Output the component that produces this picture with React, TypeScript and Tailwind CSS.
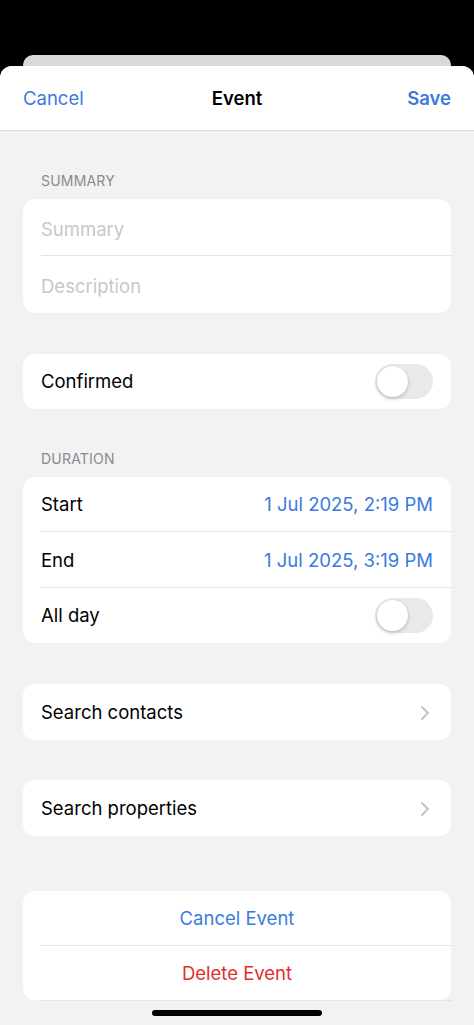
import React from 'react'

const font = { fontFamily: 'Inter, "Noto Sans", sans-serif' }

const Toggle = () => (
  <div className="relative w-[58px] h-[35px] rounded-full bg-[#e9e9ea]">
    <div className="absolute left-[2px] top-[2px] w-[31px] h-[31px] rounded-full bg-white shadow-[0_2px_4px_rgba(0,0,0,0.18),0_0_0_0.5px_rgba(0,0,0,0.06)]" />
  </div>
)

const Chevron = () => (
  <svg width="12" height="16" viewBox="0 0 12 16" fill="none">
    <path d="M3 2l6 6-6 6" stroke="#c4c4c7" strokeWidth="2" strokeLinecap="round" strokeLinejoin="round" />
  </svg>
)

const Caption = ({ children }: { children: React.ReactNode }) => (
  <div className="h-[20px] mb-[9px] pl-[18px] flex items-center text-[14px] tracking-[0.2px] text-[#8a8a8e]">
    {children}
  </div>
)

const Row = ({
  children,
  height,
  last,
}: {
  children: React.ReactNode
  height: string
  last?: boolean
}) => (
  <div className="pl-[18px]">
    <div
      className={`${height} pr-[18px] flex items-center justify-between ${last ? '' : 'border-b border-[#e4e4e6]'}`}
    >
      {children}
    </div>
  </div>
)

export default function App() {
  return (
    <div className="relative h-[1025px] overflow-hidden bg-black" style={font}>
      <div className="h-[55px]" />
      <div className="mx-[23px] h-[11px] rounded-t-[10px] bg-[#d9d9d9]" />

      <div className="h-[959px] rounded-t-[12px] overflow-hidden bg-[#f2f2f2]">
        {/* header */}
        <div className="h-[65px] pt-[2px] bg-white border-b border-[#d6d6d8] px-[23px] flex items-center text-[18.5px]">
          <span className="flex-1 text-[#3a7ae0]">Cancel</span>
          <span className="font-semibold text-black">Event</span>
          <span className="flex-1 text-right font-semibold text-[#3a7ae0]">Save</span>
        </div>

        <div className="px-[23px] pt-[39px] text-[18.5px] text-black">
          <Caption>SUMMARY</Caption>
          <div className="rounded-[12px] bg-white">
            <Row height="h-[57px] pt-[5px]">
              <span className="text-[#c7c7c9]">Summary</span>
            </Row>
            <Row height="h-[57px] pt-[5px]" last>
              <span className="text-[#c7c7c9]">Description</span>
            </Row>
          </div>

          <div className="mt-[41px] rounded-[12px] bg-white">
            <Row height="h-[55px]" last>
              <span>Confirmed</span>
              <Toggle />
            </Row>
          </div>

          <div className="mt-[39px]">
            <Caption>DURATION</Caption>
          </div>
          <div className="rounded-[12px] bg-white">
            <Row height="h-[55px] pt-[2px]">
              <span>Start</span>
              <span className="text-[#3a7ae0]">1 Jul 2025, 2:19 PM</span>
            </Row>
            <Row height="h-[56px] pt-[2px]">
              <span>End</span>
              <span className="text-[#3a7ae0]">1 Jul 2025, 3:19 PM</span>
            </Row>
            <Row height="h-[55px]" last>
              <span>All day</span>
              <Toggle />
            </Row>
          </div>

          <div className="mt-[41px] rounded-[12px] bg-white">
            <div className="h-[56px] pt-[2px] pl-[18px] pr-[20px] flex items-center justify-between">
              <span>Search contacts</span>
              <Chevron />
            </div>
          </div>

          <div className="mt-[40px] rounded-[12px] bg-white">
            <div className="h-[56px] pt-[2px] pl-[18px] pr-[20px] flex items-center justify-between">
              <span>Search properties</span>
              <Chevron />
            </div>
          </div>

          <div className="mt-[55px] rounded-[12px] bg-white">
            <div className="pl-[18px]">
              <div className="h-[55px] border-b border-[#e4e4e6]" />
            </div>
            <div className="-mt-[55px] h-[55px] flex items-center justify-center">
              <span className="text-[#3a7ae0]">Cancel Event</span>
            </div>
            <div className="h-[54px] pt-[2px] flex items-center justify-center">
              <span className="text-[#e0302a]">Delete Event</span>
            </div>
          </div>
          <div className="ml-[17px] -mr-[1px] h-px bg-[#e4e4e6]" />
        </div>
      </div>

      <div className="absolute bottom-[9px] left-[152px] w-[170px] h-[6px] rounded-full bg-black" />
    </div>
  )
}
